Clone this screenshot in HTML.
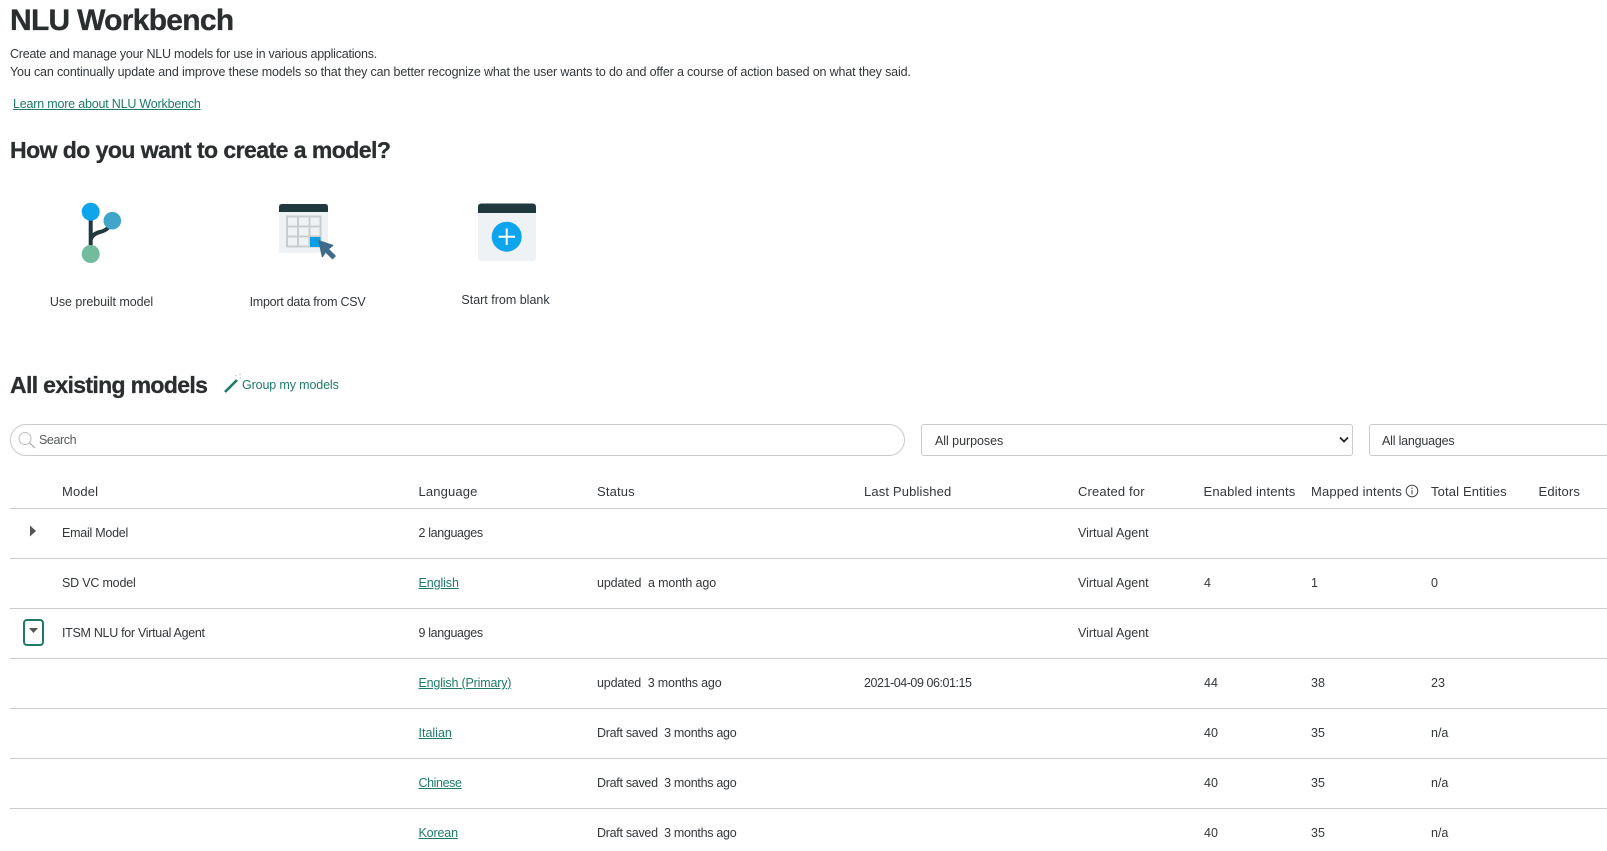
<!DOCTYPE html>
<html lang="en"><head><meta charset="utf-8"><title>NLU Workbench</title>
<style>
html,body{margin:0;padding:0;background:#fff}
body{width:1607px;height:851px;overflow:hidden;position:relative;font-family:"Liberation Sans",sans-serif;font-size:12.5px;color:#33373a}
.t{position:absolute;white-space:nowrap;line-height:18px;height:18px;letter-spacing:-.25px}
.h{font-size:13px;letter-spacing:.15px}
.n{letter-spacing:0}
.c{transform:translateX(-50%)}
.a{color:#1f7a6a;text-decoration:underline}
h1,h2{position:absolute;margin:0;white-space:nowrap;color:#2b2e2f;font-weight:700;-webkit-text-stroke:.3px #2b2e2f}
.l{position:absolute;left:10px;right:0;height:1px;background:#c9cccc}
.box{position:absolute;box-sizing:border-box;border:1px solid #c9cbcb;background:#fff}
svg{position:absolute}
</style></head><body>
<h1 style="left:10px;top:2px;font-size:30px;line-height:38px;letter-spacing:-.72px">NLU Workbench</h1>
<span class="t" style="left:10px;top:45px;letter-spacing:-.23px">Create and manage your NLU models for use in various applications.</span>
<span class="t" style="left:10px;top:63px;letter-spacing:-.155px">You can continually update and improve these models so that they can better recognize what the user wants to do and offer a course of action based on what they said.</span>
<span class="t a" style="left:13px;top:95px;letter-spacing:-.2px">Learn more about NLU Workbench</span>
<h2 style="left:10px;top:135px;font-size:23px;line-height:30px;letter-spacing:-.54px">How do you want to create a model?</h2>

<svg style="left:60px;top:190px" width="90" height="90" viewBox="60 190 90 90">
<path d="M90.7 212V254M90.7 240Q92 234 100 232Q105 231 109 227" fill="none" stroke="#20393f" stroke-width="4"/>
<circle cx="90.7" cy="211.7" r="9" fill="#0ea5ec"/><circle cx="112.3" cy="220.7" r="8.8" fill="#41a5c9"/><circle cx="90.7" cy="254" r="9" fill="#72bb9f"/>
</svg>
<svg style="left:265px;top:190px" width="90" height="90" viewBox="265 190 90 90">
<rect x="279" y="204" width="49" height="49" fill="#eef2f4"/>
<path d="M279 212V207Q279 204 282 204H325Q328 204 328 207V212Z" fill="#20393f"/>
<path d="M287 216.5H320.5V246.5H287ZM298 216.5V246.5M309.5 216.5V246.5M287 226.5H320.5M287 236.5H320.5" fill="none" stroke="#c9cdcd" stroke-width="2"/>
<rect x="310" y="237" width="10.5" height="10" fill="#0c9fe6"/>
<path d="M319 241L332.500 245.500L328 249L335 256L332.500 258.500L325.500 251.500L322.500 256.500Z" fill="#3d6d8a" stroke="#3d6d8a" stroke-width="1.500" stroke-linejoin="round"/>
</svg>
<svg style="left:460px;top:190px" width="90" height="90" viewBox="460 190 90 90">
<rect x="478" y="206" width="58" height="55" rx="3" fill="#eef2f4"/>
<path d="M478 213V207Q478 203.5 481.5 203.5H532.5Q536 203.5 536 207V213Z" fill="#20393f"/>
<circle cx="506.7" cy="236.7" r="15" fill="#0ea5ec"/>
<path d="M506.7 228.5V245M498.5 236.700H515" stroke="#fff" stroke-width="2" fill="none"/>
</svg>
<span class="t c" style="left:101.5px;top:293px;letter-spacing:-.05px">Use prebuilt model</span>
<span class="t c" style="left:307.5px;top:293px">Import data from CSV</span>
<span class="t c n" style="left:505.5px;top:291px">Start from blank</span>

<h2 style="left:10px;top:370px;font-size:23px;line-height:30px;letter-spacing:-.65px">All existing models</h2>
<svg style="left:222px;top:372px" width="20" height="22" viewBox="222 372 20 22">
<path d="M225 392L237 380" stroke="#1f7a6a" stroke-width="2.6" fill="none"/>
<path d="M236 375V376M240 378H241M239.500 375L240.500 374" stroke="#8fbdb3" stroke-width="1" fill="none"/>
</svg>
<span class="t" style="left:242px;top:376px;color:#1f7a6a;letter-spacing:-.13px">Group my models</span>

<div class="box" style="left:10px;top:424px;width:895px;height:32px;border-radius:16px"></div>
<svg style="left:16px;top:430px" width="22" height="22" viewBox="0 0 22 22"><circle cx="9" cy="8.500" r="6" fill="none" stroke="#bcbfbf" stroke-width="1"/><path d="M13.500 13L19 18" stroke="#9a9e9e" stroke-width="1" fill="none"/></svg>
<span class="t" style="left:39px;top:431px;color:#55595a;letter-spacing:-.4px">Search</span>
<div class="box" style="left:921px;top:424px;width:432px;height:32px;border-radius:3px"></div>
<span class="t" style="left:935px;top:432px;letter-spacing:-.05px">All purposes</span>
<svg style="left:1338px;top:435px" width="12" height="10" viewBox="0 0 12 10"><path d="M2 2.500L6 6.500L10 2.500" fill="none" stroke="#222" stroke-width="1.800"/></svg>
<div class="box" style="left:1369px;top:424px;width:260px;height:32px;border-radius:3px"></div>
<span class="t" style="left:1382px;top:432px;letter-spacing:-.2px">All languages</span>

<span class="t h" style="left:62px;top:483px">Model</span>
<span class="t h" style="left:418.500px;top:483px">Language</span>
<span class="t h" style="left:597px;top:483px">Status</span>
<span class="t h" style="left:864px;top:483px">Last Published</span>
<span class="t h" style="left:1078px;top:483px">Created for</span>
<span class="t h" style="left:1203.500px;top:483px">Enabled intents</span>
<span class="t h" style="left:1311px;top:483px">Mapped intents</span>
<svg style="left:1405px;top:484px" width="14" height="14" viewBox="0 0 14 14"><circle cx="7" cy="7" r="5.800" fill="none" stroke="#444" stroke-width="1"/><path d="M7 6V10.500M7 3.500V5" stroke="#444" stroke-width="1" fill="none"/></svg>
<span class="t h" style="left:1431px;top:483px">Total Entities</span>
<span class="t h" style="left:1538.500px;top:483px">Editors</span>
<div class="l" style="top:508px"></div>

<svg style="left:28px;top:524px" width="10" height="14" viewBox="0 0 10 14"><path d="M2 1.500L8 7L2 12.500Z" fill="#555"/></svg>
<span class="t" style="left:62px;top:524px">Email Model</span>
<span class="t" style="left:418.500px;top:524px;letter-spacing:-.35px">2 languages</span>
<span class="t n" style="left:1078px;top:524px">Virtual Agent</span>
<div class="l" style="top:558px"></div>

<span class="t" style="left:62px;top:574px;letter-spacing:-.2px">SD VC model</span>
<span class="t a" style="left:418.500px;top:574px;letter-spacing:-.1px">English</span>
<span class="t" style="left:597px;top:574px;letter-spacing:-.13px">updated&nbsp; a month ago</span>
<span class="t n" style="left:1078px;top:574px">Virtual Agent</span>
<span class="t n" style="left:1204px;top:574px">4</span>
<span class="t n" style="left:1311px;top:574px">1</span>
<span class="t n" style="left:1431px;top:574px">0</span>
<div class="l" style="top:608px"></div>

<div class="box" style="left:23px;top:619px;width:21px;height:27px;border:2px solid #1f7a6a;border-radius:4px"></div>
<svg style="left:28px;top:627px" width="11" height="8" viewBox="0 0 11 8"><path d="M1 1H10L5.500 6Z" fill="#555"/></svg>
<span class="t" style="left:62px;top:624px;letter-spacing:-.3px">ITSM NLU for Virtual Agent</span>
<span class="t" style="left:418.500px;top:624px;letter-spacing:-.35px">9 languages</span>
<span class="t n" style="left:1078px;top:624px">Virtual Agent</span>
<div class="l" style="top:658px"></div>

<span class="t a" style="left:418.500px;top:674px;letter-spacing:-.18px">English (Primary)</span>
<span class="t" style="left:597px;top:674px;letter-spacing:-.16px">updated&nbsp; 3 months ago</span>
<span class="t" style="left:864px;top:674px;letter-spacing:-.45px">2021-04-09 06:01:15</span>
<span class="t n" style="left:1204px;top:674px">44</span>
<span class="t n" style="left:1311px;top:674px">38</span>
<span class="t n" style="left:1431px;top:674px">23</span>
<div class="l" style="top:708px"></div>

<span class="t a n" style="left:418.500px;top:724px">Italian</span>
<span class="t" style="left:597px;top:724px;letter-spacing:-.29px">Draft saved&nbsp; 3 months ago</span>
<span class="t n" style="left:1204px;top:724px">40</span>
<span class="t n" style="left:1311px;top:724px">35</span>
<span class="t n" style="left:1431px;top:724px">n/a</span>
<div class="l" style="top:758px"></div>

<span class="t a" style="left:418.500px;top:774px;letter-spacing:-.4px">Chinese</span>
<span class="t" style="left:597px;top:774px;letter-spacing:-.29px">Draft saved&nbsp; 3 months ago</span>
<span class="t n" style="left:1204px;top:774px">40</span>
<span class="t n" style="left:1311px;top:774px">35</span>
<span class="t n" style="left:1431px;top:774px">n/a</span>
<div class="l" style="top:808px"></div>

<span class="t a" style="left:418.500px;top:824px;letter-spacing:-.15px">Korean</span>
<span class="t" style="left:597px;top:824px;letter-spacing:-.29px">Draft saved&nbsp; 3 months ago</span>
<span class="t n" style="left:1204px;top:824px">40</span>
<span class="t n" style="left:1311px;top:824px">35</span>
<span class="t n" style="left:1431px;top:824px">n/a</span>
</body></html>
